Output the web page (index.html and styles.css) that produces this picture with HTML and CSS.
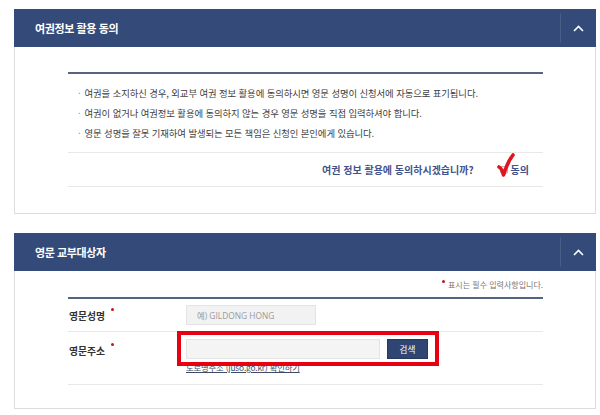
FILE: index.html
```html
<!DOCTYPE html>
<html lang="ko">
<head>
<meta charset="utf-8">
<link rel="stylesheet" href="styles.css">
</head>
<body>
<div class="page">
  <section class="panel">
    <div class="panel-head">
      <h2 class="panel-title">여권정보 활용 동의</h2>
      <span class="toggle"><svg width="11" height="7" viewBox="0 0 11 7"><path d="M1 6 L5.5 1.5 L10 6" fill="none" stroke="#fff" stroke-width="1.6"/></svg></span>
    </div>
    <div class="panel-body consent">
      <ul class="notes">
        <li>여권을 소지하신 경우, 외교부 여권 정보 활용에 동의하시면 영문 성명이 신청서에 자동으로 표기됩니다.</li>
        <li>여권이 없거나 여권정보 활용에 동의하지 않는 경우 영문 성명을 직접 입력하셔야 합니다.</li>
        <li>영문 성명을 잘못 기재하여 발생되는 모든 책임은 신청인 본인에게 있습니다.</li>
      </ul>
      <div class="question">
        <span class="q-text">여권 정보 활용에 동의하시겠습니까?</span>
        <label class="agree">
          <span class="box"><svg class="tick" width="18" height="24" viewBox="0 0 18 24"><path d="M2 14 C4 15 5.5 18 6.5 22 C9 14 12 7 16 2" fill="none" stroke="#e0141e" stroke-width="3.6" stroke-linecap="round" stroke-linejoin="round"/></svg></span>동의
        </label>
      </div>
    </div>
  </section>

  <section class="panel">
    <div class="panel-head">
      <h2 class="panel-title">영문 교부대상자</h2>
      <span class="toggle"><svg width="11" height="7" viewBox="0 0 11 7"><path d="M1 6 L5.5 1.5 L10 6" fill="none" stroke="#fff" stroke-width="1.6"/></svg></span>
    </div>
    <div class="panel-body form">
      <p class="req-note"><span class="dot"></span>표시는 필수 입력사항입니다.</p>
      <div class="form-rows">
        <div class="row">
          <span class="label">영문성명<span class="dot"></span></span>
          <div class="field"><span class="input name">예) GILDONG HONG</span></div>
        </div>
        <div class="row addr">
          <span class="label">영문주소<span class="dot"></span></span>
          <div class="field">
            <div class="search">
              <span class="input address"></span>
              <span class="btn">검색</span>
              <span class="highlight"></span>
            </div>
            <a class="link">도로명주소 (juso.go.kr) 확인하기</a>
          </div>
        </div>
      </div>
    </div>
  </section>
</div>
</body>
</html>
```

FILE: styles.css
```css
* { box-sizing: border-box; }
html, body { margin: 0; padding: 0; background: #fff; }
body {
  font-family: "Noto Sans CJK KR", "Noto Sans", "Liberation Sans", sans-serif;
  color: #444;
  width: 600px;
  height: 415px;
  overflow: hidden;
}
.page {
  padding: 9px 4px 0 14px;
  display: flex;
  flex-direction: column;
  gap: 19px;
}
.panel { display: flex; flex-direction: column; }
.panel-head {
  height: 38px;
  background: #344a79;
  display: flex;
  align-items: center;
  justify-content: space-between;
}
.panel-title {
  margin: 0;
  padding-left: 21px;
  font-size: 11px;
  font-weight: 700;
  color: #fff;
  letter-spacing: -0.4px;
}
.toggle {
  width: 36px;
  height: 30px;
  border-left: 1px solid #495d89;
  display: flex;
  align-items: center;
  justify-content: center;
}
.panel-body {
  border: 1px solid #dcdcdc;
  border-top: none;
  padding: 0 52px 0 53px;
}
.consent { padding-top: 25px; padding-bottom: 26px; }
.notes {
  list-style: none;
  margin: 0;
  padding: 9px 0 9px 10px;
  border-top: 2px solid #56647f;
  font-size: 9.4px;
  line-height: 20px;
  color: #404040;
  letter-spacing: -0.1px;
}
.notes li::before {
  content: "·";
  color: #888;
  margin-right: 4px;
}
.question {
  height: 35px;
  border-top: 1px solid #e8e8e8;
  border-bottom: 1px solid #e8e8e8;
  display: flex;
  align-items: center;
  justify-content: flex-end;
  padding-right: 14px;
}
.q-text {
  font-size: 10px;
  font-weight: 700;
  color: #41528a;
  margin-right: 26px;
}
.agree {
  display: flex;
  align-items: center;
  font-size: 10px;
  font-weight: 700;
  color: #41528a;
}
.box {
  position: relative;
  width: 8px;
  height: 8px;
  border: 1px solid #b8b8c8;
  border-radius: 2px;
  background: #eef;
  margin-right: 3px;
}
.tick { position: absolute; left: -4px; top: -14px; }
.form { padding-bottom: 23px; }
.req-note {
  margin: 0;
  text-align: right;
  font-size: 8px;
  color: #777;
  line-height: 14px;
  padding: 7px 0 5px;
}
.req-note .dot { margin-right: 3px; vertical-align: 5px; }
.dot {
  display: inline-block;
  width: 3px;
  height: 3px;
  border-radius: 50%;
  background: #c0161e;
}
.form-rows { border-top: 2px solid #56647f; }
.row {
  display: flex;
  border-bottom: 1px solid #e8e8e8;
  min-height: 33px;
  align-items: center;
}
.label {
  width: 118px;
  padding-left: 1px;
  font-size: 9.8px;
  font-weight: 700;
  color: #333;
  align-self: flex-start;
  padding-top: 9px;
}
.label .dot { vertical-align: 9px; margin-left: 6px; }
.row.addr { align-items: flex-start; padding: 7px 0 11px; }
.row.addr .label { padding-top: 4px; }
.input {
  display: flex;
  align-items: center;
  height: 20px;
  background: #f2f2f2;
  border: 1px solid #e4e4e4;
  padding-left: 10px;
  font-size: 8.4px;
  color: #9a9a9a;
  font-family: "Open Sans", "Noto Sans CJK KR", sans-serif;
}
.input.name { width: 130px; }
.search {
  position: relative;
  display: flex;
  gap: 7px;
}
.input.address { width: 194px; background: #f4f4f4; }
.btn {
  width: 41px;
  height: 20px;
  background: #2f4673;
  color: #fff;
  font-size: 8.6px;
  display: flex;
  align-items: center;
  justify-content: center;
  border: 1px solid #25385e;
}
.highlight {
  position: absolute;
  left: -9px;
  top: -8px;
  width: 262px;
  height: 35px;
  border: 4px solid #e60012;
}
.link {
  display: block;
  margin-top: 3px;
  font-size: 8.4px;
  line-height: 11px;
  color: #3e4a66;
  text-decoration: underline;
  letter-spacing: -0.2px;
}
```
